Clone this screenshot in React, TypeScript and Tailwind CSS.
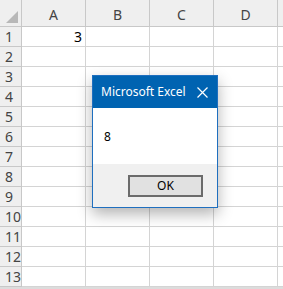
import React from 'react';

const cols = ['A', 'B', 'C', 'D', ''];
const rows = Array.from({ length: 13 }, (_, i) => i + 1);

export default function App() {
  return (
    <div className="relative w-[283px] h-[289px] overflow-hidden bg-[#dcdcdc] font-['Noto_Sans',sans-serif] text-[#444]">
      <div className="grid grid-cols-[22px_64px_64px_64px_64px_64px] grid-rows-[27px_repeat(13,20px)] bg-white">
        <div className="relative bg-[#efefef] border-r border-b border-[#c8c8c8]">
          <svg className="absolute right-[3px] bottom-[3px]" width="12" height="12" viewBox="0 0 12 12">
            <polygon points="12,0 12,12 0,12" fill="#b8b8b8" />
          </svg>
        </div>
        {cols.map((c, i) => (
          <div
            key={i}
            className="flex items-center justify-center bg-[#efefef] border-r border-b border-[#c8c8c8] text-[14px] pt-[2px]"
          >
            {c}
          </div>
        ))}
        {rows.map((r) => (
          <React.Fragment key={r}>
            <div className="flex items-center pl-[5px] bg-[#efefef] border-r border-b border-[#c8c8c8] text-[14px] text-[#444]">
              {r}
            </div>
            {cols.map((c, i) => (
              <div
                key={i}
                className="flex items-center justify-end pr-[3px] border-r border-b border-[#d4d4d4] text-[14px] text-black"
              >
                {r === 1 && c === 'A' ? '3' : ''}
              </div>
            ))}
          </React.Fragment>
        ))}
      </div>

      <div className="absolute left-[92px] top-[75px] w-[126px] h-[133px] flex flex-col bg-white border border-[#1f6fbf] shadow-[0_6px_14px_rgba(0,0,0,0.3)]">
        <div className="flex items-center justify-between h-[32px] bg-[#0063b1] pl-[8px] pr-[9px] text-white text-[12px]">
          <span>Microsoft Excel</span>
          <svg width="11" height="11" viewBox="0 0 11 11">
            <path d="M0.5 0.5L10.5 10.5M10.5 0.5L0.5 10.5" stroke="white" strokeWidth="1.2" />
          </svg>
        </div>
        <div className="flex-1 pl-[11px] pt-[20px] text-[12px] text-black">8</div>
        <div className="h-[43px] bg-[#f0f0f0] flex items-center justify-end pr-[14px]">
          <button className="w-[75px] h-[22px] border-2 border-[#6b6b6b] bg-[#e1e1e1] text-[12px] text-black flex items-center justify-center">
            OK
          </button>
        </div>
      </div>
    </div>
  );
}
